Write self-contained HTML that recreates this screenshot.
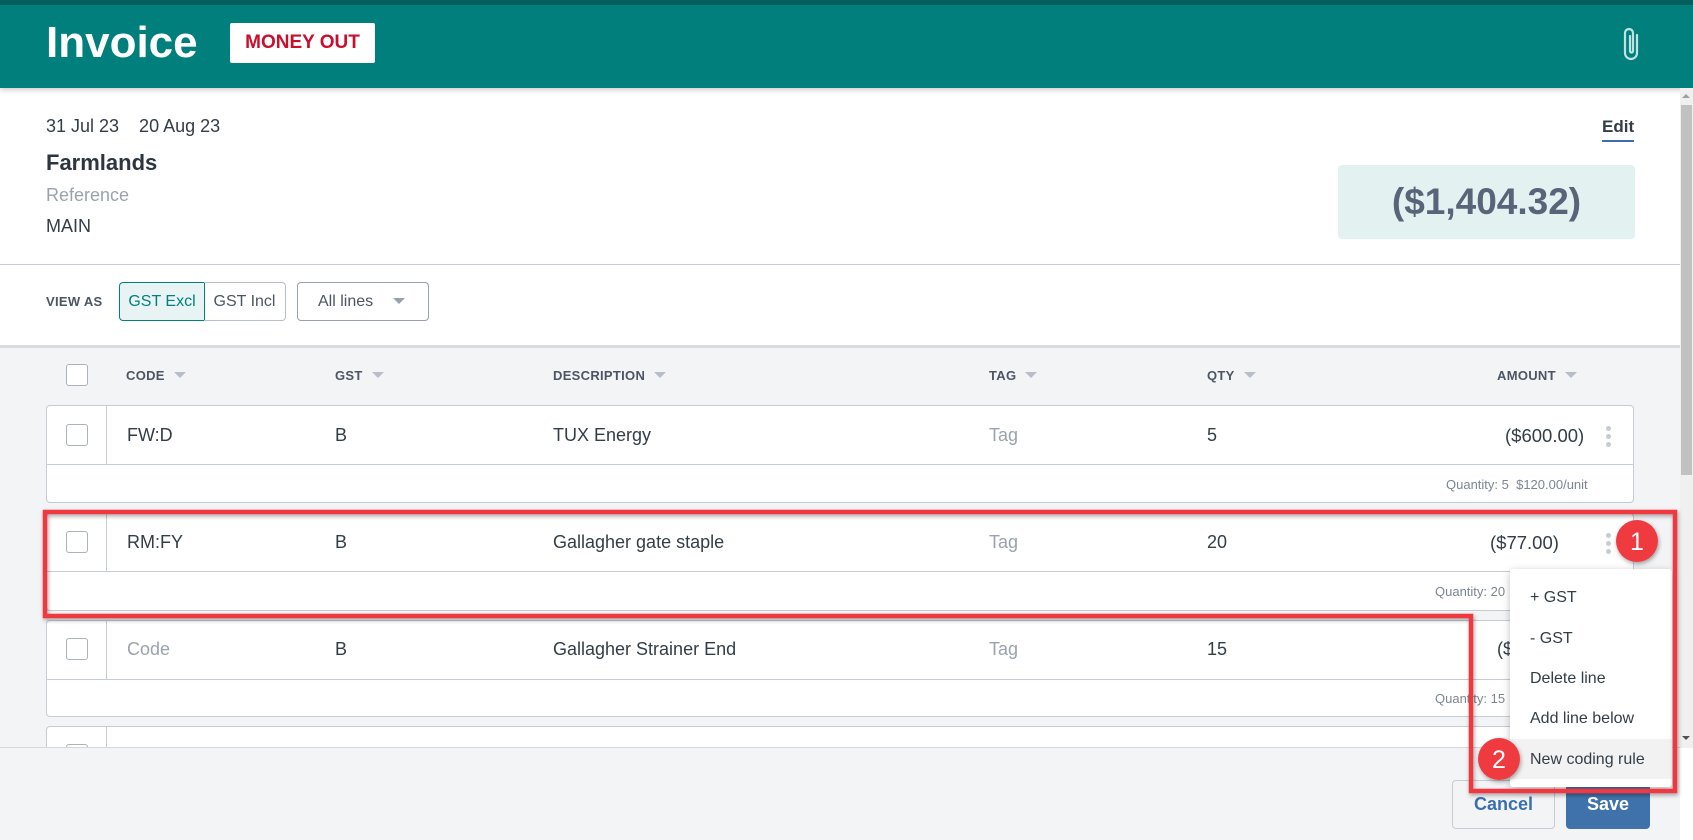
<!DOCTYPE html>
<html><head><meta charset="utf-8"><style>
*{box-sizing:border-box;margin:0;padding:0}
body{width:1693px;height:840px;overflow:hidden;position:relative;background:#fff;font-family:"Liberation Sans",sans-serif;color:#333d47}
.a{position:absolute;white-space:nowrap}
.hdr{left:0;top:0;width:1693px;height:88px;background:#007f7d;border-top:5px solid #055e5c;box-shadow:0 2px 5px rgba(0,0,0,.2)}
.ch{font-size:13px;font-weight:bold;color:#4b5563;letter-spacing:.3px}
.tri{display:inline-block;width:0;height:0;border-left:6px solid transparent;border-right:6px solid transparent;border-top:6px solid #b7bec8;margin-left:9px;vertical-align:2px}
.card{position:absolute;left:46px;width:1588px;background:#fff;border:1px solid #c5ccd6;border-radius:4px}
.cb{position:absolute;width:22px;height:22px;border:1.5px solid #aab2bd;border-radius:3px;background:#fff}
.t{font-size:18px;color:#333d47}
.ph{color:#9aa3ad}
.sm{font-size:13px;color:#7b8594}
.mi{font-size:16px;color:#333d47;left:1530px}
.dots{position:absolute;width:5px}
.dots i{display:block;width:5px;height:5px;border-radius:50%;background:#c5ccd6;margin-bottom:3px}
</style></head><body>
<div class="a hdr"></div>
<div class="a" style="left:46px;top:18px;font-size:44px;font-weight:bold;color:#fff">Invoice</div>
<div class="a" style="left:230px;top:23px;width:145px;height:40px;background:#fff;border-radius:2px;color:#c8102e;font-weight:bold;font-size:19px;text-align:center;line-height:40px">MONEY OUT</div>
<svg class="a" style="left:1620px;top:24px" width="24" height="40" viewBox="0 0 24 40"><path d="M17 11 V29 A6 6 0 0 1 5 29 V9 A4 4 0 0 1 13 9 V27 A1.5 1.5 0 0 1 10 27 V12" fill="none" stroke="#bfe3e0" stroke-width="2.2" stroke-linecap="round"/></svg>
<div class="a" style="left:1680px;top:88px;width:13px;height:660px;background:#f0f0f0"></div>
<div class="a" style="left:1681px;top:105px;width:11px;height:370px;background:#c1c1c1"></div>
<div class="a" style="left:1682px;top:94px;width:0;height:0;border-left:4px solid transparent;border-right:4px solid transparent;border-bottom:4px solid #a0a0a0"></div>
<div class="a" style="left:1682px;top:736px;width:0;height:0;border-left:4px solid transparent;border-right:4px solid transparent;border-top:4px solid #505050"></div>

<div class="a t" style="left:46px;top:116px">31 Jul 23&nbsp;&nbsp;&nbsp; 20 Aug 23</div>
<div class="a" style="left:46px;top:150px;font-size:22px;font-weight:bold;color:#2d3540">Farmlands</div>
<div class="a t ph" style="left:46px;top:185px">Reference</div>
<div class="a t" style="left:46px;top:216px">MAIN</div>
<div class="a" style="left:1602px;top:117px;font-size:17px;font-weight:bold;color:#333d47;border-bottom:2px solid #3b6fb0;padding-bottom:3px">Edit</div>
<div class="a" style="left:1338px;top:165px;width:297px;height:74px;background:#e3f1f1;border-radius:4px;text-align:center;line-height:74px;font-size:37px;font-weight:bold;color:#586579">($1,404.32)</div>
<div class="a" style="left:0;top:264px;width:1680px;height:1px;background:#c5ccd6"></div>

<div class="a ch" style="left:46px;top:294px">VIEW AS</div>
<div class="a" style="left:119px;top:282px;width:86px;height:39px;background:#e8f4f3;border:1px solid #007f7d;border-radius:4px 0 0 4px;color:#007f7d;font-size:16px;text-align:center;line-height:37px">GST Excl</div>
<div class="a" style="left:204px;top:282px;width:82px;height:39px;border:1px solid #b7bec8;border-left:none;border-radius:0 4px 4px 0;color:#4b5563;font-size:16px;text-align:center;line-height:37px">GST Incl</div>
<div class="a" style="left:297px;top:282px;width:132px;height:39px;border:1px solid #98a1ad;border-radius:4px;color:#4b5563;font-size:16px;line-height:37px;padding-left:20px">All lines<span class="tri" style="margin-left:20px;border-top-color:#98a1ad"></span></div>

<div class="a" style="left:0;top:345px;width:1680px;height:403px;background:#f3f4f6;border-top:3px solid #d8dce1"></div>
<div class="cb" style="left:66px;top:364px"></div>
<div class="a ch" style="left:126px;top:368px">CODE<span class="tri"></span></div>
<div class="a ch" style="left:335px;top:368px">GST<span class="tri"></span></div>
<div class="a ch" style="left:553px;top:368px">DESCRIPTION<span class="tri"></span></div>
<div class="a ch" style="left:989px;top:368px">TAG<span class="tri"></span></div>
<div class="a ch" style="left:1207px;top:368px">QTY<span class="tri"></span></div>
<div class="a ch" style="left:1497px;top:368px">AMOUNT<span class="tri"></span></div>

<div class="card" style="top:405px;height:98px"></div>
<div class="a" style="left:106px;top:406px;width:1px;height:58px;background:#c5ccd6"></div>
<div class="a" style="left:47px;top:464px;width:1586px;height:1px;background:#c5ccd6"></div>
<div class="cb" style="left:66px;top:424px"></div>
<div class="a t" style="left:127px;top:425px">FW:D</div>
<div class="a t" style="left:335px;top:425px">B</div>
<div class="a t" style="left:553px;top:425px">TUX Energy</div>
<div class="a t ph" style="left:989px;top:425px">Tag</div>
<div class="a t" style="left:1207px;top:425px">5</div>
<div class="a t" style="left:1505px;top:425px;font-size:18.5px">($600.00)</div>
<div class="dots" style="left:1606px;top:426px"><i></i><i></i><i></i></div>
<div class="a sm" style="left:1446px;top:477px">Quantity: 5&nbsp;&nbsp;$120.00/unit</div>

<div class="card" style="top:513px;height:98px"></div>
<div class="a" style="left:106px;top:514px;width:1px;height:58px;background:#c5ccd6"></div>
<div class="a" style="left:47px;top:571px;width:1586px;height:1px;background:#c5ccd6"></div>
<div class="cb" style="left:66px;top:531px"></div>
<div class="a t" style="left:127px;top:532px">RM:FY</div>
<div class="a t" style="left:335px;top:532px">B</div>
<div class="a t" style="left:553px;top:532px">Gallagher gate staple</div>
<div class="a t ph" style="left:989px;top:532px">Tag</div>
<div class="a t" style="left:1207px;top:532px">20</div>
<div class="a t" style="left:1490px;top:532px;font-size:18.5px">($77.00)</div>
<div class="dots" style="left:1606px;top:533px"><i></i><i></i><i></i></div>
<div class="a sm" style="left:1435px;top:584px">Quantity: 20</div>

<div class="card" style="top:620px;height:97px"></div>
<div class="a" style="left:106px;top:621px;width:1px;height:58px;background:#c5ccd6"></div>
<div class="a" style="left:47px;top:679px;width:1586px;height:1px;background:#c5ccd6"></div>
<div class="cb" style="left:66px;top:638px"></div>
<div class="a t ph" style="left:127px;top:639px">Code</div>
<div class="a t" style="left:335px;top:639px">B</div>
<div class="a t" style="left:553px;top:639px">Gallagher Strainer End</div>
<div class="a t ph" style="left:989px;top:639px">Tag</div>
<div class="a t" style="left:1207px;top:639px">15</div>
<div class="a t" style="left:1497px;top:639px">($</div>
<div class="a sm" style="left:1435px;top:691px">Quantity: 15</div>

<div class="card" style="top:726px;height:60px"></div>
<div class="a" style="left:106px;top:727px;width:1px;height:30px;background:#c5ccd6"></div>
<div class="cb" style="left:66px;top:744px"></div>

<div class="a" style="left:0;top:747px;width:1680px;height:93px;background:#f3f4f6;border-top:1px solid #d3d8de"></div>
<div class="a" style="left:1452px;top:780px;width:103px;height:49px;border:1px solid #c5ccd6;border-radius:4px;text-align:center;line-height:47px;font-size:18px;font-weight:bold;color:#3b6fb0">Cancel</div>
<div class="a" style="left:1566px;top:780px;width:84px;height:49px;background:#3f72ab;border-radius:4px;text-align:center;line-height:49px;font-size:18px;font-weight:bold;color:#fff">Save</div>

<div class="a" style="left:1510px;top:569px;width:162px;height:218px;background:#fff;box-shadow:0 2px 8px rgba(0,0,0,.25);border-radius:3px"></div>
<div class="a" style="left:1510px;top:739px;width:162px;height:40px;background:#f2f2f2"></div>
<div class="a mi" style="top:589px">+ GST</div>
<div class="a mi" style="top:630px">- GST</div>
<div class="a mi" style="top:670px">Delete line</div>
<div class="a mi" style="top:710px">Add line below</div>
<div class="a mi" style="top:751px">New coding rule</div>

<svg class="a" style="left:0;top:0" width="1693" height="840">
<defs><filter id="s" x="-5%" y="-5%" width="110%" height="110%"><feDropShadow dx="1" dy="2" stdDeviation="2" flood-opacity=".35"/></filter></defs>
<g filter="url(#s)" fill="none" stroke="#f0393f" stroke-width="4.5">
<path d="M45,616 V512 H1675 V791 H1471 V616 Z"/>
</g>
<g filter="url(#s)">
<circle cx="1637" cy="541" r="21" fill="#ef3a40"/>
<circle cx="1499" cy="759" r="21" fill="#ef3a40"/>
</g>
<text x="1637" y="550" fill="#fff" font-family="Liberation Sans" font-size="25" text-anchor="middle">1</text>
<text x="1499" y="768" fill="#fff" font-family="Liberation Sans" font-size="25" text-anchor="middle">2</text>
</svg>
</body></html>
